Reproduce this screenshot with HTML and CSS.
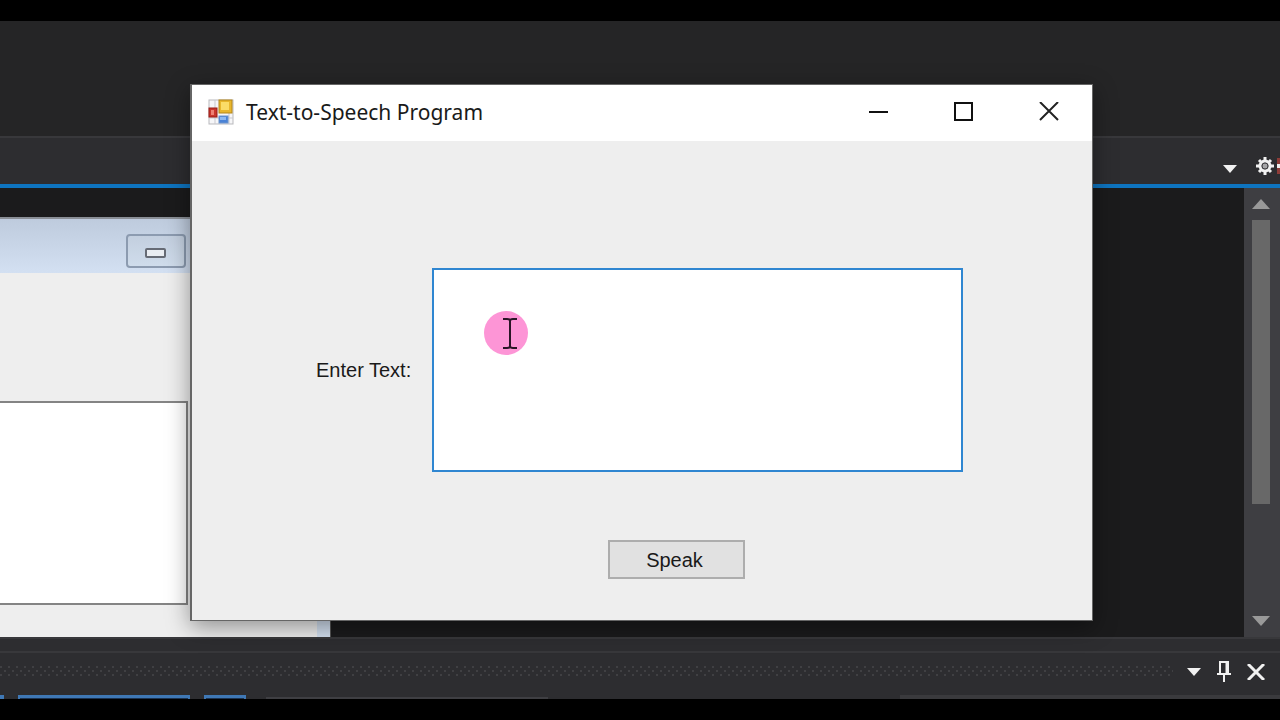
FILE: index.html
```html
<!DOCTYPE html>
<html lang="en">
<head>
    <meta charset="UTF-8">
    <meta name="viewport" content="width=device-width, initial-scale=1.0">
    <title>Text-to-Speech Program</title>
    <link rel="stylesheet" href="styles.css">
</head>
<body>
    <main class="ide">
        <div class="menu-area"></div>

        <div class="tab-bar">
            <button class="icon-button" aria-label="Open documents">
                <svg width="14" height="8" viewBox="0 0 14 8"><path d="M0 0h14L7 8z" fill="#f1f1f1"/></svg>
            </button>
            <button class="icon-button" aria-label="Settings">
                <svg width="20" height="20" viewBox="0 0 20 20">
                    <g stroke="#f1f1f1" stroke-width="3">
                        <path d="M10 1v18M1 10h18M4 4l12 12M16 4L4 16"/>
                    </g>
                    <circle cx="10" cy="10" r="5" fill="#6c6c6f" stroke="#f1f1f1" stroke-width="3"/>
                    <circle cx="10" cy="10" r="3" fill="#a5a5a7" stroke="#3c3c3f" stroke-width="1"/>
                </svg>
            </button>
            <span class="edge-mark"></span>
        </div>

        <div class="editor">
            <div class="designer">
                <div class="designer-title">
                    <button class="designer-minimize" aria-label="Minimize form">
                        <svg width="22" height="11" viewBox="0 0 22 11"><rect x="1" y="1" width="19" height="8" rx="1" fill="#e9edf2" stroke="#666b75" stroke-width="2"/></svg>
                    </button>
                </div>
                <div class="designer-body">
                    <div class="designer-textbox"></div>
                </div>
            </div>
            <div class="scrollbar">
                <svg width="18" height="10" viewBox="0 0 18 10"><path d="M0 10h18L9 0z" fill="#999"/></svg>
                <div class="scroll-thumb"></div>
                <svg width="18" height="10" viewBox="0 0 18 10"><path d="M0 0h18L9 10z" fill="#999"/></svg>
            </div>
        </div>

        <div class="panel">
            <div class="panel-header">
                <div class="grip"></div>
                <button class="icon-button" aria-label="Window position">
                    <svg width="14" height="8" viewBox="0 0 14 8"><path d="M0 0h14L7 8z" fill="#f1f1f1"/></svg>
                </button>
                <button class="icon-button" aria-label="Auto hide">
                    <svg width="14" height="22" viewBox="0 0 14 22">
                        <path d="M3 13V1h8v12M0 13h14M7 13v8" fill="none" stroke="#f1f1f1" stroke-width="2"/>
                        <path d="M10 1v12" stroke="#f1f1f1" stroke-width="3"/>
                    </svg>
                </button>
                <button class="icon-button" aria-label="Close panel">
                    <svg width="18" height="16" viewBox="0 0 18 16"><path d="M1 0l16 16M17 0L1 16" stroke="#f1f1f1" stroke-width="3"/></svg>
                </button>
            </div>
            <div class="panel-tools">
                <span class="tool tool-first"></span>
                <span class="tool tool-wide"></span>
                <span class="tool tool-small"></span>
                <span class="tool-text"></span>
                <span class="tool-search"></span>
            </div>
        </div>
    </main>

    <section class="window">
        <header class="title-bar">
            <svg width="26" height="26" viewBox="0 0 26 26">
                <rect x="1" y="1" width="24" height="24" fill="#f6f6f8" stroke="#b9b9bd"/>
                <path d="M7 1v24M1 19h24M21 14v11" stroke="#c9c9cf"/>
                <rect x="1" y="9" width="8" height="9" fill="#c9362c" stroke="#9a1d17"/>
                <rect x="3" y="11" width="3" height="5" fill="#ee8074"/>
                <rect x="11" y="1" width="13" height="13" fill="#e8b62c" stroke="#b4861a"/>
                <rect x="13" y="3" width="8" height="8" fill="#fbdc68"/>
                <rect x="11" y="17" width="9" height="7" fill="#4a82d6" stroke="#6d94cc"/>
                <rect x="12" y="18" width="6" height="3" fill="#8db8f2"/>
            </svg>
            <h1>Text-to-Speech Program</h1>
            <div class="window-buttons">
                <button class="icon-button" aria-label="Minimize">
                    <svg width="20" height="20" viewBox="0 0 20 20"><path d="M0 10h19" stroke="#111" stroke-width="2"/></svg>
                </button>
                <button class="icon-button" aria-label="Maximize">
                    <svg width="20" height="20" viewBox="0 0 20 20"><rect x="1" y="1" width="17" height="17" fill="none" stroke="#111" stroke-width="2"/></svg>
                </button>
                <button class="icon-button" aria-label="Close">
                    <svg width="20" height="20" viewBox="0 0 20 20"><path d="M1 0l18 18M19 0L1 18" stroke="#222" stroke-width="2"/></svg>
                </button>
            </div>
        </header>
        <form class="speech-form">
            <div class="field">
                <label for="speechText">Enter Text:</label>
                <div class="text-wrap">
                    <textarea id="speechText"></textarea>
                    <svg class="pointer" width="46" height="46" viewBox="0 0 46 46">
                        <circle cx="23" cy="23" r="22" fill="#fd95d6"/>
                        <path d="M20 9h4q3 0 3 2q0-2 3-2h4M20 38h4q3 0 3-2q0 2 3 2h4M27 10v27" fill="none" stroke="#2a1526" stroke-width="2"/>
                    </svg>
                </div>
            </div>
            <button type="button" class="speak">Speak</button>
        </form>
    </section>
</body>
</html>
```

FILE: styles.css
```css
* {
    box-sizing: border-box;
}

body {
    margin: 0;
    min-height: 100vh;
    padding: 21px 0;
    display: flex;
    background-color: #000;
    font-family: "Liberation Sans", Arial, sans-serif;
    font-size: 20px;
    color: #1a1a1a;
    overflow: hidden;
}

button {
    font: inherit;
    color: inherit;
    padding: 0;
    cursor: pointer;
}

svg {
    display: block;
}

.icon-button {
    border: none;
    background: none;
}

/* IDE in the background */
.ide {
    flex: 1;
    min-width: 0;
    display: flex;
    flex-direction: column;
    background-color: #2d2d30;
}

.menu-area {
    height: 115px;
    background-color: #252526;
}

.tab-bar {
    height: 52px;
    display: flex;
    align-items: center;
    justify-content: flex-end;
    gap: 18px;
    padding-top: 9px;
    border-top: 2px solid #38383b;
    border-bottom: 4px solid #0e74bf;
    position: relative;
}

.tab-bar .icon-button:first-child {
    padding-top: 6px;
}

.tab-bar .icon-button:nth-child(2) {
    margin-right: 5px;
}

.edge-mark {
    position: absolute;
    right: 0;
    top: 20px;
    width: 3px;
    height: 16px;
    background: linear-gradient(#8d3c38 40%, #eee 40%, #eee 60%, #8d3c38 60%);
}

.editor {
    flex: 1;
    display: flex;
    justify-content: space-between;
    background-color: #1b1b1c;
}

.scrollbar {
    width: 36px;
    padding: 11px 0 11px 8px;
    display: flex;
    flex-direction: column;
    gap: 11px;
    background-color: #3e3e42;
}

.scroll-thumb {
    width: 18px;
    height: 284px;
    margin-bottom: auto;
    background-color: #686868;
}

/* Form designer */
.designer {
    width: 331px;
    margin-top: 29px;
    display: flex;
    flex-direction: column;
    background-color: #d3e0f0;
    border-top: 2px solid #8a8f96;
    border-right: 1px solid #555;
}

.designer-title {
    height: 54px;
    padding: 15px 0 0 126px;
    background: linear-gradient(#becbdd, #d3e0f2);
}

.designer-minimize {
    width: 60px;
    height: 34px;
    display: flex;
    align-items: center;
    justify-content: center;
    padding-top: 4px;
    border: 2px solid #8c9bb0;
    border-radius: 4px;
    background: linear-gradient(#c3cfdf, #cfdceb);
}

.designer-body {
    flex: 1;
    width: 317px;
    padding-top: 128px;
    background-color: #eee;
}

.designer-textbox {
    width: 188px;
    height: 204px;
    background-color: #fff;
    border: 2px solid #848484;
    border-left: none;
}

/* Bottom panel */
.panel {
    padding-top: 12px;
    border-top: 2px solid #38383b;
}

.panel-header {
    height: 44px;
    display: flex;
    align-items: center;
    gap: 16px;
    padding: 0 15px 5px 0;
    border-top: 2px solid #38383b;
}

.grip {
    flex: 1;
    height: 12px;
    margin-right: -2px;
    background-image: radial-gradient(circle at 1px 1px, #404043 1px, transparent 1px), radial-gradient(circle at 5px 5px, #404043 1px, transparent 1px);
    background-size: 8px 8px;
}

.panel-tools {
    height: 4px;
    display: flex;
    align-items: flex-end;
}

.tool {
    height: 4px;
    border: 2px solid #3f78b5;
    border-top-width: 3px;
    border-bottom: none;
    background-color: #1c3350;
}

.tool-first {
    width: 4px;
    margin-right: 14px;
}

.tool-wide {
    width: 172px;
    margin-right: 14px;
}

.tool-small {
    width: 42px;
    margin-right: 20px;
}

.tool-text {
    width: 282px;
    height: 2px;
    margin-right: 352px;
    background-color: #3f3f43;
}

.tool-search {
    flex: 1;
    height: 4px;
    background-color: #3a3a3d;
}

/* Program window */
.window {
    position: absolute;
    top: 84px;
    left: 190px;
    right: 187px;
    border: 1px solid #666;
    border-left-width: 2px;
    background-color: #eee;
    box-shadow: 0 6px 22px rgba(0, 0, 0, 0.4);
}

.title-bar {
    height: 56px;
    display: flex;
    align-items: center;
    gap: 12px;
    padding: 0 33px 2px 16px;
    background-color: #fff;
}

.title-bar h1 {
    margin: 0;
    font-family: "Noto Sans", "Segoe UI", sans-serif;
    font-size: 21px;
    font-weight: normal;
}

.window-buttons {
    display: flex;
    gap: 65px;
    margin-left: auto;
}

.speech-form {
    padding: 127px 129px 41px 124px;
}

.field {
    display: flex;
    align-items: center;
}

.field label {
    width: 116px;
}

.text-wrap {
    flex: 1;
    position: relative;
}

.text-wrap textarea {
    display: block;
    width: 100%;
    height: 204px;
    padding: 8px;
    border: 2px solid #2f86d1;
    background-color: #fff;
    font: inherit;
    resize: none;
    outline: none;
}

.pointer {
    position: absolute;
    left: 51px;
    top: 42px;
    pointer-events: none;
}

.speak {
    display: block;
    width: 137px;
    height: 39px;
    margin: 68px 0 0 292px;
    padding: 2px 4px 0 0;
    border: 2px solid #adadad;
    background-color: #e1e1e1;
}
```
